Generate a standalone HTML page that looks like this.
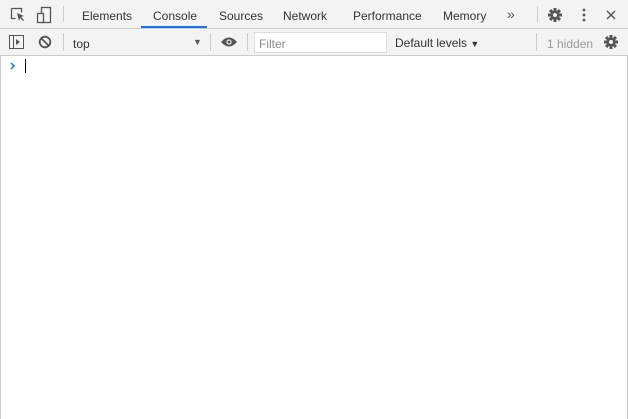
<!DOCTYPE html>
<html><head><style>
body{margin:0;width:628px;height:419px;background:#fff;font-family:"Liberation Sans",sans-serif;font-size:12px;color:#333;position:relative;overflow:hidden}
.a{position:absolute}
.bar1{left:0;top:0;width:628px;height:28px;background:#f3f3f3;border-bottom:1px solid #ccc}
.bar2{left:0;top:29px;width:628px;height:26px;background:#f3f3f3;border-bottom:1px solid #ccc}
.t{top:9px;color:#333}
.sep{width:1px;background:#ccc}
</style></head><body>
<div class="a" style="left:0;top:0;width:1px;height:419px;background:#ccc"></div>
<div class="a" style="right:0;top:0;width:1px;height:419px;background:#ccc"></div>
<div class="a bar1"></div>
<div class="a bar2"></div>
<svg class="a" style="left:10px;top:7px" width="16" height="16" viewBox="0 0 16 16"><path d="M1.5 1.5h10v4M1.5 1.5v10h4" fill="none" stroke="#555" stroke-width="1.3"/><path d="M7 6l7 3-3 1 3 3-1 1-3-3-1 3z" fill="#555"/></svg>
<svg class="a" style="left:36px;top:6px" width="16" height="18" viewBox="0 0 16 18"><rect x="5.5" y="1.5" width="9" height="15" fill="none" stroke="#555" stroke-width="1.3"/><rect x="1.5" y="7.5" width="6" height="9" fill="#f3f3f3" stroke="#555" stroke-width="1.3"/></svg>
<div class="a sep" style="left:63px;top:6px;height:16px"></div>
<div class="a t" style="left:82px">Elements</div>
<div class="a t" style="left:153px">Console</div>
<div class="a" style="left:141px;top:26px;width:66px;height:2px;background:#1a73e8"></div>
<div class="a t" style="left:219px">Sources</div>
<div class="a t" style="left:283px">Network</div>
<div class="a t" style="left:353px">Performance</div>
<div class="a t" style="left:443px">Memory</div>
<div class="a t" style="left:507px;top:6px;font-size:14px;color:#555">»</div>
<div class="a sep" style="left:537px;top:6px;height:16px"></div>
<svg class="a" style="left:548px;top:8px" width="14" height="14" viewBox="0 0 14 14"><g fill="#555"><circle cx="7" cy="7" r="4.5"/><rect x="5.5" y="0" width="3" height="14"/><rect x="0" y="5.5" width="14" height="3"/><rect x="5.5" y="0" width="3" height="14" transform="rotate(45 7 7)"/><rect x="5.5" y="0" width="3" height="14" transform="rotate(-45 7 7)"/></g><circle cx="7" cy="7" r="2" fill="#f3f3f3"/></svg>
<svg class="a" style="left:582px;top:8px" width="4" height="14"><circle cx="2" cy="2" r="1.4" fill="#555"/><circle cx="2" cy="7" r="1.4" fill="#555"/><circle cx="2" cy="12" r="1.4" fill="#555"/></svg>
<svg class="a" style="left:606px;top:10px" width="10" height="10"><path d="M1 1l8 8M9 1l-8 8" stroke="#555" stroke-width="1.4"/></svg>
<svg class="a" style="left:9px;top:35px" width="15" height="14"><rect x="0.5" y="0.5" width="14" height="13" fill="none" stroke="#555"/><path d="M4.5 1v12" stroke="#555"/><path d="M7 4l4 3-4 3z" fill="#555"/></svg>
<svg class="a" style="left:38px;top:35px" width="14" height="14"><circle cx="7" cy="7" r="5.3" fill="none" stroke="#555" stroke-width="1.8"/><path d="M3.5 3.5l7 7" stroke="#555" stroke-width="1.8"/></svg>
<div class="a sep" style="left:63px;top:33px;height:18px"></div>
<div class="a" style="left:73px;top:37px">top</div>
<div class="a" style="left:193px;top:37px;font-size:9px;color:#555">▼</div>
<div class="a sep" style="left:210px;top:33px;height:18px"></div>
<svg class="a" style="left:220px;top:36px" width="18" height="12"><path d="M1 6Q9 -3 17 6Q9 15 1 6z" fill="#555"/><circle cx="9" cy="6" r="2.6" fill="#f3f3f3"/><circle cx="9" cy="6" r="1.5" fill="#555"/></svg>
<div class="a sep" style="left:247px;top:33px;height:18px"></div>
<div class="a" style="left:254px;top:32px;width:131px;height:19px;background:#fff;border:1px solid #ddd"></div>
<div class="a" style="left:259px;top:37px;color:#888">Filter</div>
<div class="a" style="left:395px;top:36px">Default levels <span style="font-size:9px">▼</span></div>
<div class="a sep" style="left:536px;top:33px;height:18px"></div>
<div class="a" style="left:547px;top:37px;color:#999">1 hidden</div>
<svg class="a" style="left:604px;top:35px" width="14" height="14" viewBox="0 0 14 14"><g fill="#555"><circle cx="7" cy="7" r="4.5"/><rect x="5.5" y="0" width="3" height="14"/><rect x="0" y="5.5" width="14" height="3"/><rect x="5.5" y="0" width="3" height="14" transform="rotate(45 7 7)"/><rect x="5.5" y="0" width="3" height="14" transform="rotate(-45 7 7)"/></g><circle cx="7" cy="7" r="2" fill="#f3f3f3"/></svg>
<svg class="a" style="left:10px;top:62px" width="6" height="8"><path d="M1 1l3 3-3 3" fill="none" stroke="#1a73e8" stroke-width="1.5"/></svg>
<div class="a" style="left:25px;top:59px;width:1px;height:14px;background:#000"></div>
</body></html>
